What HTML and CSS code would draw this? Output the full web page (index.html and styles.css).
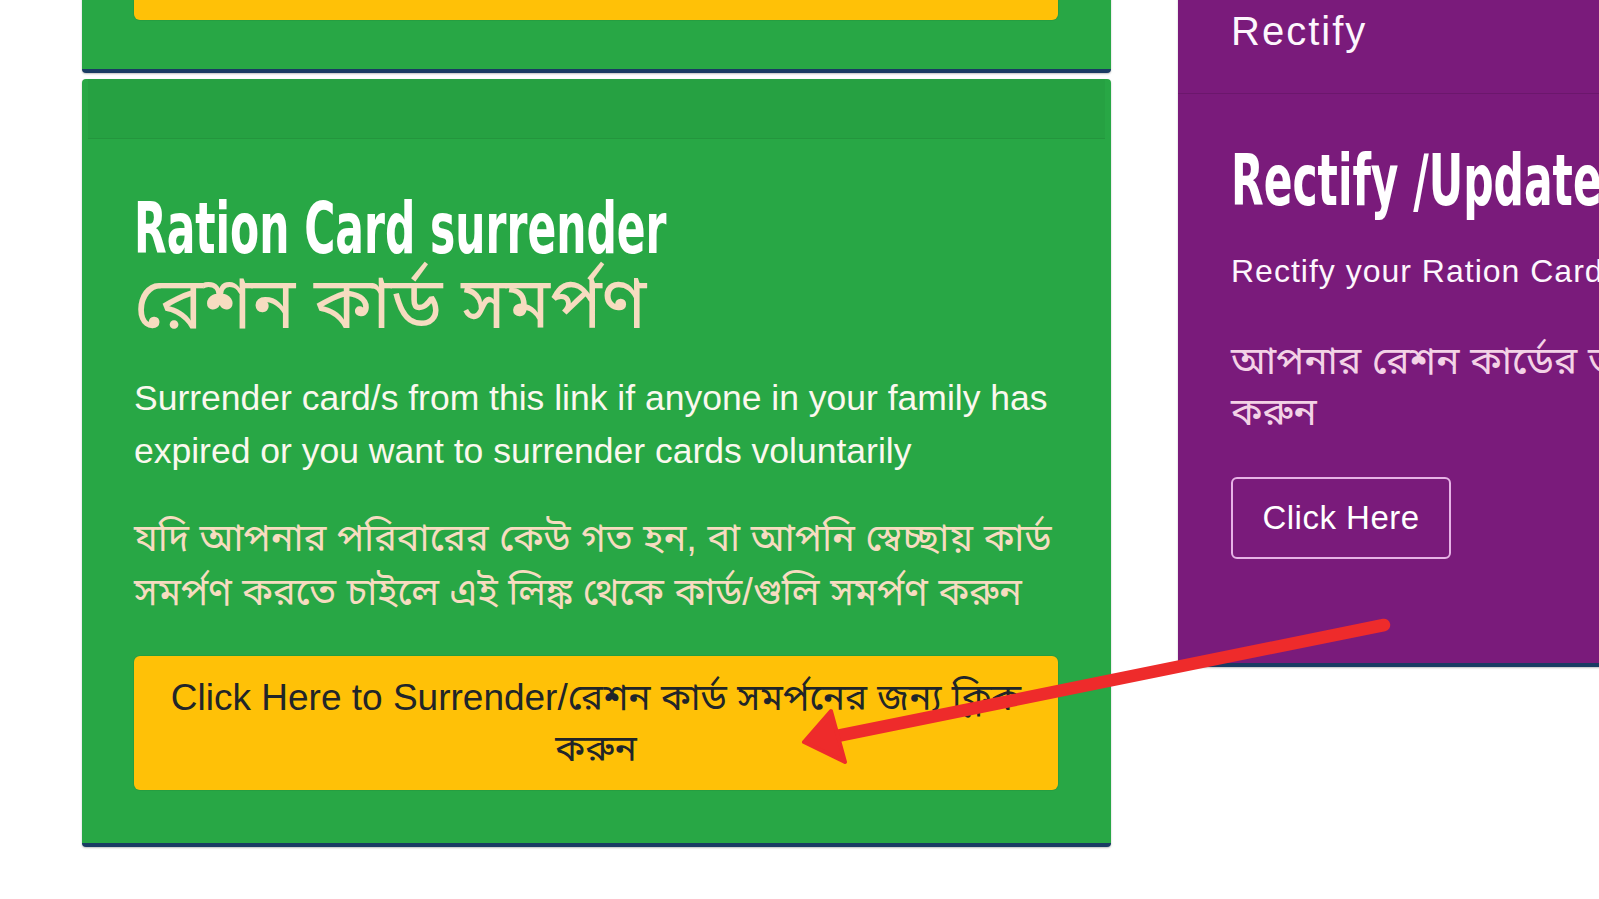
FILE: index.html
```html
<!DOCTYPE html>
<html lang="en">
<head>
<meta charset="utf-8">
<title>Ration Card</title>
<link rel="stylesheet" href="styles.css">
</head>
<body>
<div class="page">
  <div class="col col-left">
    <div class="card card-green card-top">
      <div class="card-body">
        <a class="btn-yellow btn-stub"></a>
      </div>
    </div>
    <div class="card card-green">
      <div class="card-header"></div>
      <div class="card-body">
        <h2 class="title"><span class="title-en">Ration Card surrender</span><span class="bn-title">রেশন কার্ড সমর্পণ</span></h2>
        <p class="text-en">Surrender card/s from this link if anyone in your family has expired or you want to surrender cards voluntarily</p>
        <p class="text-bn">যদি আপনার পরিবারের কেউ গত হন, বা আপনি স্বেচ্ছায় কার্ড সমর্পণ করতে চাইলে এই লিঙ্ক থেকে কার্ড/গুলি সমর্পণ করুন</p>
        <a class="btn-yellow">Click Here to Surrender/রেশন কার্ড সমর্পনের জন্য ক্লিক করুন</a>
      </div>
    </div>
  </div>
  <div class="col col-right">
    <div class="card card-purple">
      <div class="purple-header">Rectify</div>
      <div class="card-body purple-body">
        <h2 class="title"><span class="title-en">Rectify /Update Ration Card</span></h2>
        <p class="text-en-p">Rectify your Ration Card</p>
        <p class="text-bn-p">আপনার রেশন কার্ডের তথ্য সংশোধন<br>করুন</p>
        <a class="btn-outline">Click Here</a>
      </div>
    </div>
  </div>
</div>
<svg class="arrow" width="1599" height="899" viewBox="0 0 1599 899">
  <line x1="1384" y1="625" x2="832" y2="737" stroke="#ee2b2b" stroke-width="12.5" stroke-linecap="round"/>
  <polygon points="804,742 831,711 845,762" fill="#ee2b2b" stroke="#ee2b2b" stroke-width="4" stroke-linejoin="round"/>
</svg>
</body>
</html>
```
FILE: styles.css
```css
* { box-sizing: border-box; }
html, body {
  margin: 0;
  padding: 0;
  background: #ffffff;
  overflow: hidden;
  width: 1599px;
  height: 899px;
}
body {
  font-family: "Liberation Sans", Arial, "Noto Sans Bengali", "Lohit Bengali", "FreeSans", sans-serif;
  position: relative;
}
.page {
  display: flex;
  align-items: flex-start;
  gap: 67px;
  margin-top: -100px;
  padding-left: 82px;
}
.col-left {
  width: 1029px;
  flex: none;
  display: flex;
  flex-direction: column;
  gap: 6px;
}
.col-right {
  width: 900px;
  flex: none;
}
.card {
  border-radius: 4px;
  border-bottom: 4px solid #1a3b63;
  box-shadow: 0 1px 2px rgba(0,0,0,0.25);
}
.card-green { background: #28a745; }
.card-purple { background: #7a1b7b; }
.card-header {
  height: 60px;
  background: rgba(0,0,0,0.035);
  border-bottom: 1px solid rgba(0,0,0,0.07);
  margin: 0 6px;
}
.card-body {
  padding: 51px 53px 53px 52px;
}
.card-top .card-body {
  padding-top: 0;
  padding-bottom: 49px;
}
.btn-stub {
  height: 120px;
}
.title {
  margin: 0;
  font-weight: normal;
  color: #ffffff;
  white-space: nowrap;
}
.title-en {
  display: block;
  font-family: "DejaVu Sans Condensed", "DejaVu Sans", sans-serif;
  font-weight: bold;
  font-size: 72px;
  line-height: 76px;
  transform: scaleX(0.655);
  transform-origin: left center;
}
.bn-title {
  display: block;
  font-family: "Noto Sans Bengali", "Lohit Bengali", "FreeSans", sans-serif;
  color: #f6dcc0;
  font-size: 72px;
  line-height: 88px;
}
.text-en {
  margin: 18px 0 33px;
  font-size: 35.5px;
  line-height: 53px;
  color: #fbf8ee;
}
.text-bn {
  margin: 0 0 37px;
  font-size: 38px;
  line-height: 54px;
  color: #f6dcc0;
}
.btn-yellow {
  display: block;
  background: #ffc107;
  border-radius: 6px;
  color: #212529;
  text-align: center;
  font-size: 37px;
  line-height: 51px;
  padding: 16px 24px;
  box-shadow: 0 0 0 1px rgba(0,0,0,0.05);
}
.purple-header {
  padding: 108px 53px 39px;
  font-size: 40px;
  line-height: 46px;
  letter-spacing: 2px;
  color: #fdf6fd;
  border-bottom: 1px solid rgba(0,0,0,0.12);
}
.purple-body {
  padding: 48px 53px 104px;
}
.text-en-p {
  margin: 33px 0 0;
  font-size: 32px;
  line-height: 40px;
  letter-spacing: 1px;
  color: #fdf6fd;
  white-space: nowrap;
}
.text-bn-p {
  margin: 44px 0 40px;
  font-size: 39px;
  line-height: 51px;
  color: #f3d2e6;
  white-space: nowrap;
}
.btn-outline {
  display: inline-flex;
  align-items: center;
  justify-content: center;
  width: 220px;
  height: 82px;
  border: 2px solid #e6b3e6;
  border-radius: 6px;
  color: #ffffff;
  font-size: 33px;
  letter-spacing: 0.5px;
}
.arrow {
  position: absolute;
  left: 0;
  top: 0;
  pointer-events: none;
}
```
